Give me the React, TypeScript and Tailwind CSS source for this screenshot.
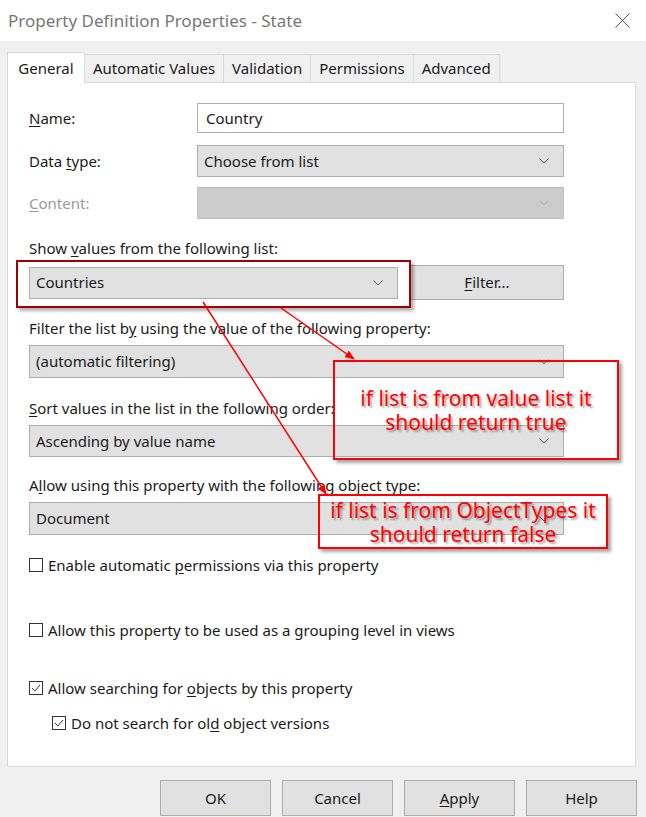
import React from 'react';

const Chevron: React.FC<{ faded?: boolean }> = ({ faded }) => (
    <svg width="10" height="6" viewBox="0 0 10 6" className="shrink-0">
        <polyline points="0.5,0.5 5,5 9.5,0.5" fill="none" stroke={faded ? '#b0b0b0' : '#606060'} strokeWidth="1" />
    </svg>
);

const Combo: React.FC<{ value?: string; disabled?: boolean; className?: string }> = ({ value, disabled, className }) => (
    <div
        className={`flex items-center justify-between pl-[6px] pr-[14px] border ${
            disabled ? 'bg-[#cccccc] border-[#bfbfbf]' : 'bg-[#e1e1e1] border-[#adadad]'
        } ${className ?? ''}`}
    >
        <span className="text-[#1a1a1a]">{value}</span>
        <Chevron faded={disabled} />
    </div>
);

const Check: React.FC<{ checked?: boolean; label: React.ReactNode; className?: string }> = ({ checked, label, className }) => (
    <div className={`flex items-center h-[20px] ${className ?? ''}`}>
        <div className="w-[14px] h-[14px] border border-[#333333] bg-white flex items-center justify-center mr-[5px]">
            {checked && (
                <svg width="10" height="8" viewBox="0 0 10 8">
                    <polyline points="1,4 3.8,7 9,1" fill="none" stroke="#333" strokeWidth="1" />
                </svg>
            )}
        </div>
        <span>{label}</span>
    </div>
);

const U: React.FC<{ children: React.ReactNode }> = ({ children }) => <span className="underline underline-offset-2">{children}</span>;

const Tab: React.FC<{ label: string }> = ({ label }) => (
    <div className="h-[28px] px-[8px] flex items-center border-t border-r border-[#d9d9d9] bg-[#f0f0f0] text-[#1a1a1a]">{label}</div>
);

const DlgButton: React.FC<{ children: React.ReactNode }> = ({ children }) => (
    <div className="w-[111px] h-[36px] flex items-center justify-center bg-[#e1e1e1] border border-[#adadad] text-[#1a1a1a]">{children}</div>
);

const Note: React.FC<{ lines: string[]; className: string }> = ({ lines, className }) => (
    <div
        className={`absolute border-2 border-[#ff0000] shadow-[3px_3px_3px_rgba(0,0,0,0.35)] flex flex-col items-center justify-center text-[#ff0000] text-[21px] leading-[24px] [text-shadow:2px_2px_2px_rgba(0,0,0,0.35)] ${className}`}
    >
        {lines.map((l) => (
            <span key={l}>{l}</span>
        ))}
    </div>
);

export default function App() {
    return (
        <div className="relative w-[646px] h-[817px] bg-[#f0f0f0] overflow-hidden text-[15px] text-[#1a1a1a] font-['Noto_Sans',sans-serif]">
            {/* title bar */}
            <div className="h-[41px] bg-white flex items-center justify-between pl-[8px] pr-[16px]">
                <span className="text-[17px] text-[#777777]">Property Definition Properties - State</span>
                <svg width="15" height="15" viewBox="0 0 15 15">
                    <path d="M0.5 0.5 L14.5 14.5 M14.5 0.5 L0.5 14.5" stroke="#555" strokeWidth="1" />
                </svg>
            </div>

            {/* tabs */}
            <div className="flex items-end pl-[7px] h-[41px]">
                <div className="relative z-10 h-[31px] w-[78px] -mb-px flex items-center justify-center bg-white border border-b-0 border-[#d9d9d9]">
                    General
                </div>
                <Tab label="Automatic Values" />
                <Tab label="Validation" />
                <Tab label="Permissions" />
                <Tab label="Advanced" />
            </div>

            {/* page */}
            <div className="mx-[7px] w-[629px] h-[685px] bg-white border border-[#d9d9d9] pt-[20px] pl-[21px]">
                <div className="flex flex-col w-[535px]">
                    <div className="flex items-center h-[30px]">
                        <span className="w-[168px]"><U>N</U>ame:</span>
                        <div className="flex-1 h-[30px] border border-[#adadad] bg-white flex items-center pl-[8px]">Country</div>
                    </div>
                    <div className="flex items-center h-[32px] mt-[12px]">
                        <span className="w-[168px]">Data <U>t</U>ype:</span>
                        <Combo value="Choose from list" className="flex-1 h-[32px]" />
                    </div>
                    <div className="flex items-center h-[32px] mt-[10px]">
                        <span className="w-[168px] text-[#9a9a9a]"><U>C</U>ontent:</span>
                        <Combo disabled className="flex-1 h-[32px]" />
                    </div>

                    <div className="mt-[19px] h-[20px] leading-[20px]">Show <U>v</U>alues from the following list:</div>
                    <div className="flex items-center gap-[12px] mt-[7px] h-[35px]">
                        <Combo value="Countries" className="w-[369px] h-[32px]" />
                        <div className="flex-1 h-[35px] bg-[#e1e1e1] border border-[#adadad] flex items-center justify-center">
                            <span><U>F</U>ilter...</span>
                        </div>
                    </div>

                    <div className="mt-[18px] h-[20px] leading-[20px]">Filter the list b<U>y</U> using the value of the following property:</div>
                    <Combo value="(automatic filtering)" className="mt-[7px] h-[33px]" />

                    <div className="mt-[20px] h-[20px] leading-[20px]"><U>S</U>ort values in the list in the following order:</div>
                    <Combo value="Ascending by value name" className="mt-[7px] h-[32px]" />

                    <div className="mt-[18px] h-[20px] leading-[20px]">A<U>l</U>low using this property with the following object type:</div>
                    <Combo value="Document" className="mt-[7px] h-[33px]" />

                    <Check className="mt-[20px]" label={<>Enable automatic <U>p</U>ermissions via this property</>} />
                    <Check className="mt-[45px]" label="Allow this property to be used as a grouping level in views" />
                    <Check className="mt-[38px]" checked label={<>Allow searching for <U>o</U>bjects by this property</>} />
                    <Check className="mt-[15px] ml-[23px]" checked label={<>Do not search for ol<U>d</U> object versions</>} />
                </div>
            </div>

            {/* dialog buttons */}
            <div className="flex justify-end gap-[11px] pr-[9px] mt-[13px]">
                <DlgButton>OK</DlgButton>
                <DlgButton>Cancel</DlgButton>
                <DlgButton><span><U>A</U>pply</span></DlgButton>
                <DlgButton>Help</DlgButton>
            </div>

            {/* annotations */}
            <div className="absolute left-[16px] top-[260px] w-[395px] h-[48px] border-2 border-[#a00000] shadow-[3px_3px_3px_rgba(0,0,0,0.3)]" />
            <Note className="left-[333px] top-[360px] w-[286px] h-[100px]" lines={['if list is from value list it', 'should return true']} />
            <Note className="left-[318px] top-[494px] w-[290px] h-[55px]" lines={['if list is from ObjectTypes it', 'should return false']} />
            <svg className="absolute inset-0 pointer-events-none" width="646" height="817">
                <defs>
                    <marker id="ah" markerWidth="10" markerHeight="8" refX="9" refY="4" orient="auto" markerUnits="userSpaceOnUse">
                        <path d="M0,0 L10,4 L0,8 Z" fill="#ff0000" />
                    </marker>
                </defs>
                <line x1="281" y1="308" x2="354" y2="359" stroke="#ff0000" strokeWidth="1.5" markerEnd="url(#ah)" />
                <line x1="203" y1="302" x2="326" y2="494" stroke="#ff0000" strokeWidth="1.5" markerEnd="url(#ah)" />
            </svg>
        </div>
    );
}
